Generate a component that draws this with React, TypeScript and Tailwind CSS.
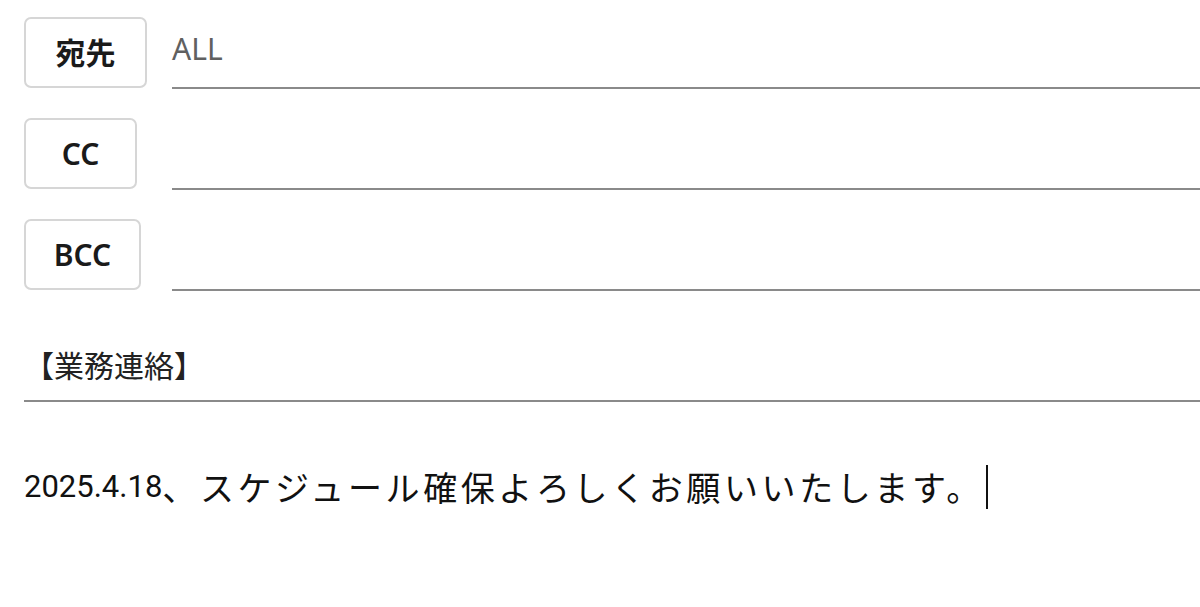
export default function App() {
  const rows = [
    { label: "宛先", value: "ALL", w: "w-[123px]" },
    { label: "CC", value: "", w: "w-[113px]" },
    { label: "BCC", value: "", w: "w-[117px]" },
  ];

  return (
    <div
      className="w-[1200px] h-[607px] bg-white overflow-hidden text-[#1a1a1a]"
      style={{ fontFamily: '"Noto Sans", "Noto Sans CJK JP", sans-serif' }}
    >
      <div className="pt-[17px] pl-[24px] flex flex-col gap-[29px]">
        {rows.map((r) => (
          <div key={r.label} className="flex items-start">
            <div className="w-[148px] shrink-0">
              <div
                className={`${r.w} h-[71px] border-2 border-[#d6d6d6] rounded-[7px] flex items-center justify-center text-[30px] font-semibold`}
              >
                {r.label}
              </div>
            </div>
            <div className="flex-1 h-[72px] border-b-2 border-[#8a8a8a] flex items-start pt-[12px]">
              <span className="text-[30px] leading-[40px] text-[#606060]">{r.value}</span>
            </div>
          </div>
        ))}
      </div>

      <div className="ml-[24px] mt-[41px] h-[70px] border-b-2 border-[#8a8a8a] flex items-center pb-[2px]">
        <span className="text-[30px] text-[#222]">【業務連絡】</span>
      </div>

      <div className="ml-[24px] mt-[62px] flex items-center h-[46px] text-[#111]">
        <span className="text-[31px] leading-[46px]" style={{ fontFamily: 'Roboto, "Noto Sans CJK JP", sans-serif' }}>
          2025.4.18
        </span>
        <span className="text-[34px] leading-[46px] tracking-[3.6px]" style={{ fontFamily: '"Noto Sans CJK JP", sans-serif' }}>
          、スケジュール確保よろしくお願いいたします。
        </span>
        <span className="ml-[2px] w-[2px] h-[44px] bg-[#111]" />
      </div>
    </div>
  );
}
